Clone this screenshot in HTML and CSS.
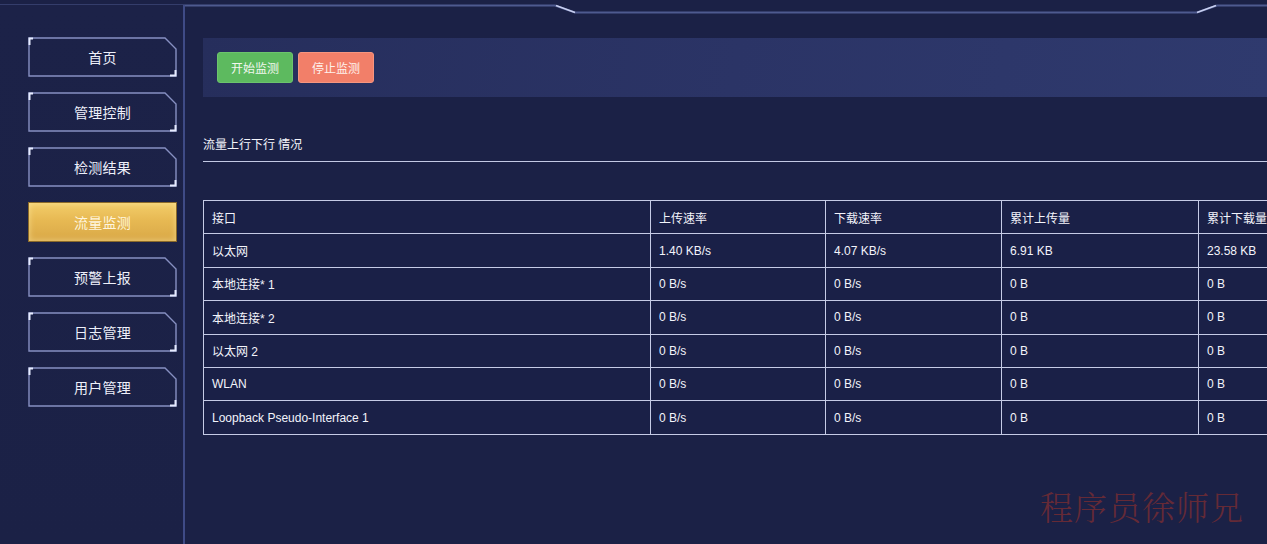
FILE: index.html
```html
<!DOCTYPE html>
<html lang="zh-CN">
<head>
<meta charset="utf-8">
<title>流量监测</title>
<link rel="stylesheet" href="styles.css">
</head>
<body>
<svg class="topline" width="1267" height="16" viewBox="0 0 1267 16">
  <path d="M0 5.5 H555 L575 12.5 H1197 L1217 5.5 H1267" fill="none" stroke="#4e5a8f" stroke-width="2"/>
  <path d="M556 5.5 L575 12.5" stroke="#c9d0f0" stroke-width="1.5"/>
  <path d="M1197 12.5 L1216 5.5" stroke="#c9d0f0" stroke-width="1.5"/>
</svg>
<div class="app">
  <aside class="sidebar">
    <nav class="menu">
      <a class="item">首页<svg class="frame" viewBox="0 0 149 40"><path d="M1 1 H137 L148 12 V39 H1 Z" /><path class="hl" d="M1.5 8 V1.5 H5 M147.5 33 V38.5 H142"/></svg></a>
      <a class="item">管理控制<svg class="frame" viewBox="0 0 149 40"><path d="M1 1 H137 L148 12 V39 H1 Z" /><path class="hl" d="M1.5 8 V1.5 H5 M147.5 33 V38.5 H142"/></svg></a>
      <a class="item">检测结果<svg class="frame" viewBox="0 0 149 40"><path d="M1 1 H137 L148 12 V39 H1 Z" /><path class="hl" d="M1.5 8 V1.5 H5 M147.5 33 V38.5 H142"/></svg></a>
      <a class="item active">流量监测</a>
      <a class="item">预警上报<svg class="frame" viewBox="0 0 149 40"><path d="M1 1 H137 L148 12 V39 H1 Z" /><path class="hl" d="M1.5 8 V1.5 H5 M147.5 33 V38.5 H142"/></svg></a>
      <a class="item">日志管理<svg class="frame" viewBox="0 0 149 40"><path d="M1 1 H137 L148 12 V39 H1 Z" /><path class="hl" d="M1.5 8 V1.5 H5 M147.5 33 V38.5 H142"/></svg></a>
      <a class="item">用户管理<svg class="frame" viewBox="0 0 149 40"><path d="M1 1 H137 L148 12 V39 H1 Z" /><path class="hl" d="M1.5 8 V1.5 H5 M147.5 33 V38.5 H142"/></svg></a>
    </nav>
  </aside>
  <main class="main">
    <div class="toolbar">
      <button class="btn btn-start">开始监测</button>
      <button class="btn btn-stop">停止监测</button>
    </div>
    <h3 class="title">流量上行下行 情况</h3>
    <div class="table-wrap">
      <table class="grid">
        <colgroup>
          <col class="c1"><col class="c2"><col class="c3"><col class="c4"><col class="c5">
        </colgroup>
        <thead>
          <tr><th>接口</th><th>上传速率</th><th>下载速率</th><th>累计上传量</th><th>累计下载量</th></tr>
        </thead>
        <tbody>
          <tr><td>以太网</td><td>1.40 KB/s</td><td>4.07 KB/s</td><td>6.91 KB</td><td>23.58 KB</td></tr>
          <tr><td>本地连接* 1</td><td>0 B/s</td><td>0 B/s</td><td>0 B</td><td>0 B</td></tr>
          <tr><td>本地连接* 2</td><td>0 B/s</td><td>0 B/s</td><td>0 B</td><td>0 B</td></tr>
          <tr><td>以太网 2</td><td>0 B/s</td><td>0 B/s</td><td>0 B</td><td>0 B</td></tr>
          <tr><td>WLAN</td><td>0 B/s</td><td>0 B/s</td><td>0 B</td><td>0 B</td></tr>
          <tr><td>Loopback Pseudo-Interface 1</td><td>0 B/s</td><td>0 B/s</td><td>0 B</td><td>0 B</td></tr>
        </tbody>
      </table>
    </div>
  </main>
</div>
<div class="watermark">程序员徐师兄</div>
</body>
</html>
```

FILE: styles.css
```css
* { box-sizing: border-box; }
html, body {
  margin: 0;
  padding: 0;
  width: 1267px;
  height: 544px;
  overflow: hidden;
  background: #1b2146;
  font-family: "Liberation Sans", "Noto Sans CJK SC", Arial, sans-serif;
  color: #ffffff;
}
body { position: relative; }

.topline {
  position: absolute;
  left: 0;
  top: 0;
  display: block;
}

.app {
  display: flex;
  height: 544px;
}

.sidebar {
  width: 185px;
  flex: none;
  padding: 37px 0 0 28px;
  background: linear-gradient(180deg, #1c2248 0%, #1b2146 100%);
  border-right: 2px solid #3f4b86;
  margin-top: 5px;
  position: relative;
  margin-right: 0;
}

.menu {
  display: flex;
  flex-direction: column;
  gap: 15px;
  margin-top: -5px;
}

.item {
  position: relative;
  display: flex;
  align-items: center;
  justify-content: center;
  width: 149px;
  height: 40px;
  font-size: 14px;
  color: #eef0fa;
  letter-spacing: 0.3px;
  text-decoration: none;
}

.frame {
  position: absolute;
  inset: 0;
  width: 149px;
  height: 40px;
  overflow: visible;
}
.frame path {
  fill: none;
  stroke: #8790c2;
  stroke-width: 1.4;
}
.frame path.hl {
  stroke: #e6ebff;
  stroke-width: 2;
}

.item.active {
  background: linear-gradient(180deg, #f3cd6a 0%, #e7b953 45%, #d9a847 100%);
  border: 1px solid #8b6a2a;
  box-shadow: inset 0 0 6px rgba(255, 236, 170, 0.6);
  color: #fff5dd;
}

.main {
  flex: 1;
  min-width: 0;
  overflow: hidden;
  padding: 38px 0 0 18px;
}

.toolbar {
  height: 59px;
  display: flex;
  align-items: flex-start;
  gap: 5px;
  padding: 14px 0 0 14px;
  background: linear-gradient(100deg, #262e5c 0%, #2b3466 50%, #2f3a6e 100%);
}

.btn {
  width: 76px;
  height: 31px;
  border: 1px solid transparent;
  border-radius: 3px;
  font-family: inherit;
  font-size: 12px;
  color: #f2f7ef;
  padding: 0;
  cursor: pointer;
}
.btn-start { background: #5dba5f; border-color: #6cc46d; }
.btn-stop { background: #f27f69; border-color: #f6957f; color: #fff1ec; }

.title {
  margin: 40px 0 0 0;
  font-size: 12px;
  font-weight: normal;
  line-height: 16px;
  padding-bottom: 8px;
  border-bottom: 1px solid #c3c9e4;
  color: #f4f5fb;
}

.table-wrap {
  margin-top: 38px;
  width: 1400px;
}

.grid {
  border-collapse: collapse;
  table-layout: fixed;
  width: 1265px;
  font-size: 12px;
  color: #f3f4fb;
  background: #1a2047;
}
.grid .c1 { width: 447px; }
.grid .c2 { width: 175px; }
.grid .c3 { width: 176px; }
.grid .c4 { width: 197px; }
.grid .c5 { width: 270px; }

.grid th, .grid td {
  height: 33.4px;
  padding: 0 0 0 8px;
  border: 1px solid #c6cbe6;
  text-align: left;
  font-weight: normal;
  white-space: nowrap;
}

.watermark {
  position: absolute;
  left: 1040px;
  top: 482px;
  font-family: "Noto Serif CJK SC", "Noto Sans CJK SC", serif;
  font-size: 33px;
  letter-spacing: 1px;
  color: #652a36;
  font-weight: 300;
}
```
